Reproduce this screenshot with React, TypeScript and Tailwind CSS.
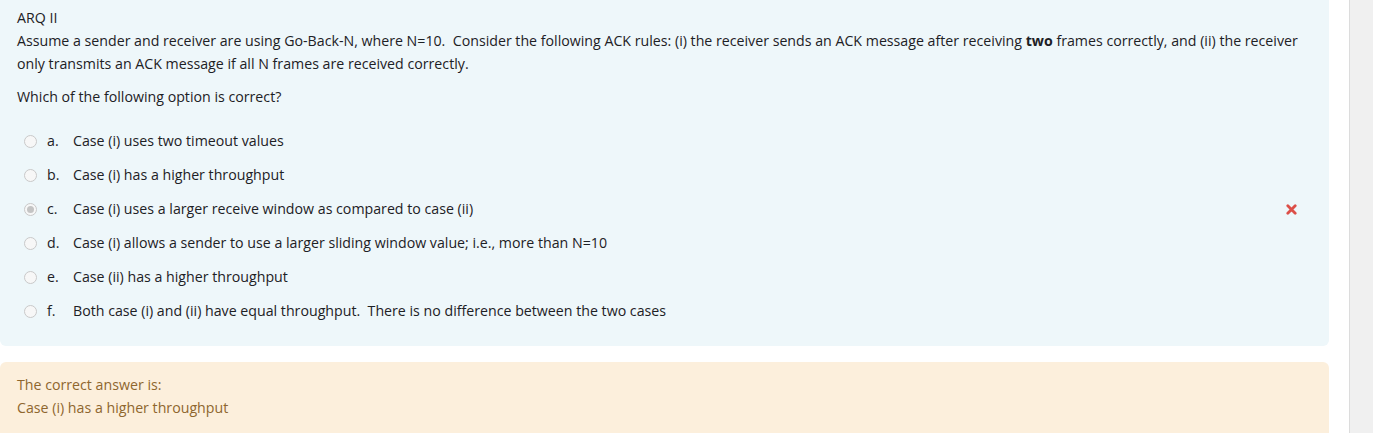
import React from "react";

const options = [
  { letter: "a.", text: "Case (i) uses two timeout values" },
  { letter: "b.", text: "Case (i) has a higher throughput" },
  { letter: "c.", text: "Case (i) uses a larger receive window as compared to case (ii)", checked: true, wrong: true },
  { letter: "d.", text: "Case (i) allows a sender to use a larger sliding window value; i.e., more than N=10" },
  { letter: "e.", text: "Case (ii) has a higher throughput" },
  { letter: "f.", text: "Both case (i) and (ii) have equal throughput.\u00a0 There is no difference between the two cases" },
];

function Radio({ checked }: { checked?: boolean }) {
  return (
    <span className="flex h-[13px] w-[13px] items-center justify-center rounded-full border border-[#c9c9c9] bg-[#f7f7f7]">
      {checked && <span className="h-[7px] w-[7px] rounded-full bg-[#c4c4c4]" />}
    </span>
  );
}

export default function App() {
  return (
    <div
      className="flex h-[433px] w-full overflow-hidden bg-white text-[14.2px] text-[#1d2125]"
      style={{ fontFamily: '"Open Sans", "Noto Sans", sans-serif' }}
    >
      <div className="flex w-[1329px] flex-col gap-4">
        <div className="rounded-b-md bg-[#eef7fa] px-[17px] pb-[18px] pt-[6px]">
          <div className="leading-[23px]">ARQ II</div>
          <p className="leading-[23px]">
            Assume a sender and receiver are using Go-Back-N, where N=10.&nbsp; Consider the following ACK rules: (i) the receiver sends an ACK message after receiving <b>two</b> frames correctly, and (ii) the receiver only transmits an ACK message if all N frames are received correctly.
          </p>
          <p className="mt-[10px] leading-[23px]">Which of the following option is correct?</p>
          <div className="mt-[16px] flex flex-col">
            {options.map((o) => (
              <div key={o.letter} className="flex h-[34px] items-center pl-[7px] pr-[15px]">
                <Radio checked={o.checked} />
                <span className="ml-[10px] w-[26px]">{o.letter}</span>
                <span className="flex-1">{o.text}</span>
                {o.wrong && (
                  <svg width="11" height="11" viewBox="0 0 11 11">
                    <path d="M1.8 1.8 L9.2 9.2 M9.2 1.8 L1.8 9.2" stroke="#dc4f48" strokeWidth="2.8" strokeLinecap="round" />
                  </svg>
                )}
              </div>
            ))}
          </div>
        </div>
        <div className="flex-1 rounded-t-md bg-[#fcefdc] px-[17px] pt-[11px] text-[#8e662e]">
          <div className="leading-[23px]">The correct answer is:</div>
          <div className="leading-[23px]">Case (i) has a higher throughput</div>
        </div>
      </div>
      <div className="w-[20px]" />
      <div className="flex-1 border-l border-[#dcdcdc] bg-[#f0f0f0]" />
    </div>
  );
}
